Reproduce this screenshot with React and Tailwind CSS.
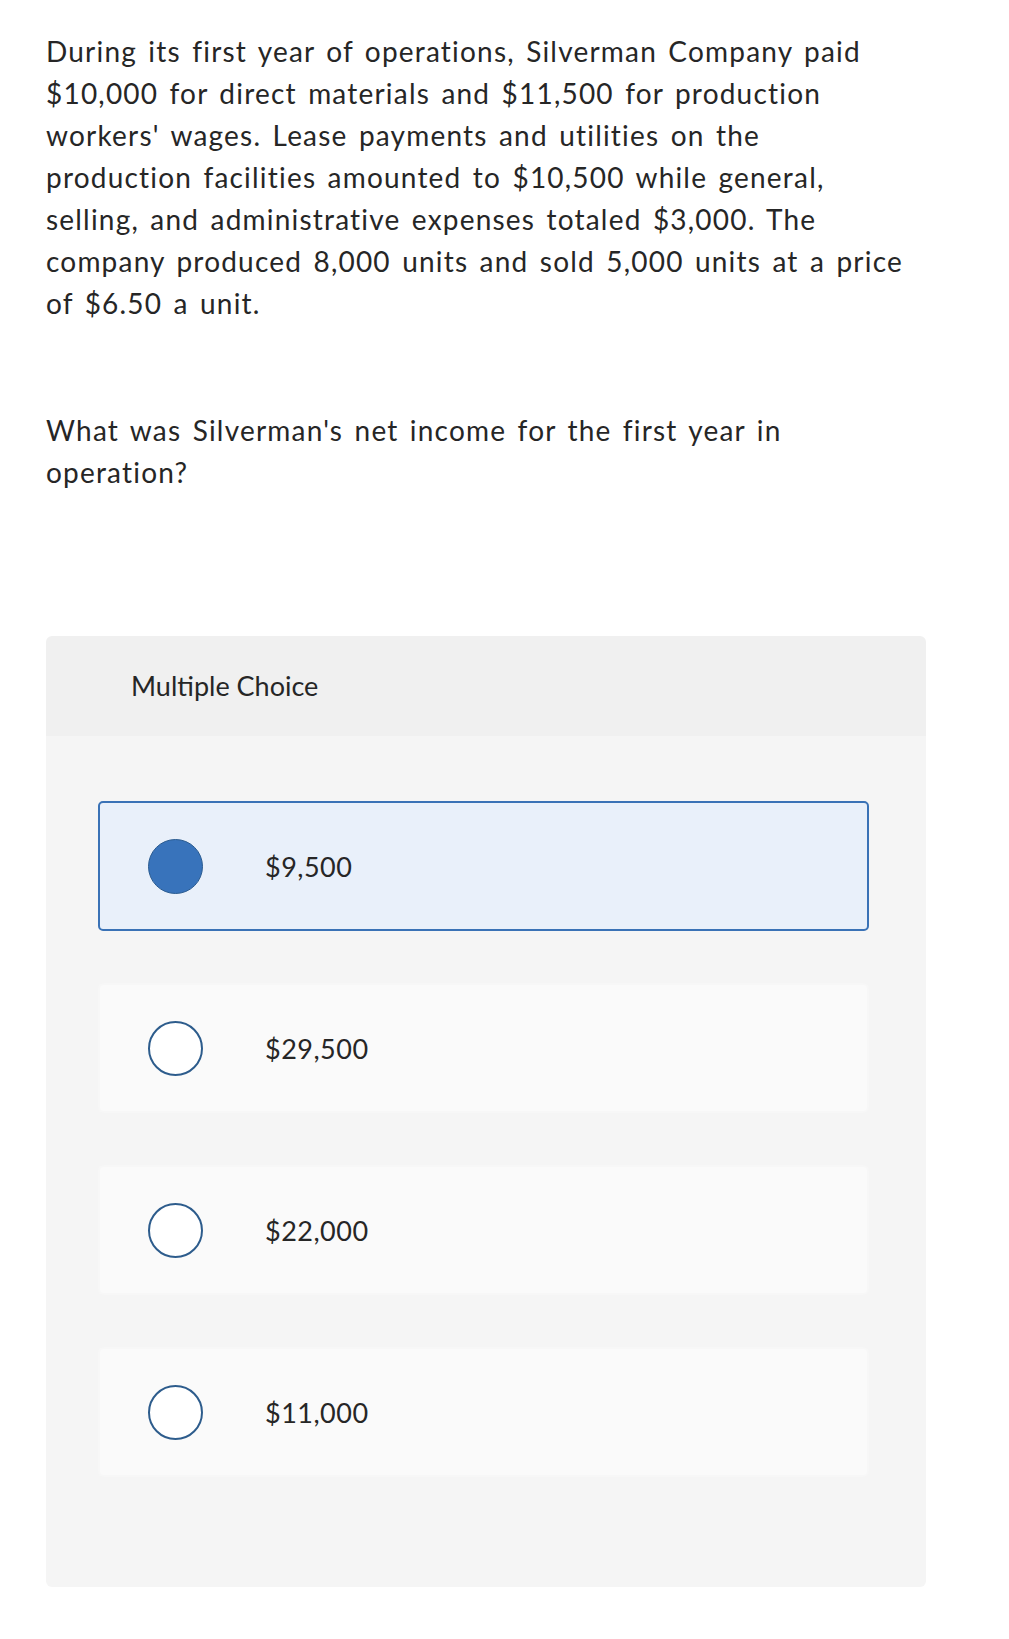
import React from "react";

const font = { fontFamily: "Lato, 'Open Sans', sans-serif" };

const para = [
  "During its first year of operations, Silverman Company paid",
  "$10,000 for direct materials and $11,500 for production",
  "workers' wages. Lease payments and utilities on the",
  "production facilities amounted to $10,500 while general,",
  "selling, and administrative expenses totaled $3,000. The",
  "company produced 8,000 units and sold 5,000 units at a price",
  "of $6.50 a unit.",
];

const question = [
  "What was Silverman's net income for the first year in",
  "operation?",
];

const options = [
  { label: "$9,500", selected: true },
  { label: "$29,500", selected: false },
  { label: "$22,000", selected: false },
  { label: "$11,000", selected: false },
];

function Option({ label, selected }) {
  return (
    <div
      className={
        selected
          ? "flex h-[130px] w-[771px] items-center rounded-[5px] border-2 border-[#3a72b6] bg-[#e9f0fa] pl-[48px]"
          : "flex h-[130px] w-[771px] items-center rounded-[6px] border-2 border-[#f7f7f7] bg-[#fafafa] pl-[48px]"
      }
    >
      {selected ? (
        <div className="h-[55px] w-[55px] shrink-0 rounded-full border-[1.5px] border-[#2a5b90] bg-[#3873bb]" />
      ) : (
        <div className="h-[55px] w-[55px] shrink-0 rounded-full border-2 border-[#2d5c8c] bg-white" />
      )}
      <span className="ml-[62px] text-[27px] leading-none tracking-[0.5px] text-[#262626] [font-variant-ligatures:none]">
        {label}
      </span>
    </div>
  );
}

export default function App() {
  return (
    <div className="min-h-[1639px] w-[1009px] bg-white text-[#262626]" style={font}>
      <div className="pl-[46px] pt-[30px] text-[28px] leading-[42px] tracking-[1.2px] [word-spacing:3px] [font-variant-ligatures:none]">
        {para.map((l, i) => (
          <div key={i} className="whitespace-nowrap">{l}</div>
        ))}
      </div>
      <div className="mt-[85px] pl-[46px] text-[28px] leading-[42px] tracking-[1.2px] [word-spacing:3px] [font-variant-ligatures:none]">
        {question.map((l, i) => (
          <div key={i} className="whitespace-nowrap">{l}</div>
        ))}
      </div>
      <div className="ml-[46px] mt-[143px] w-[880px] overflow-hidden rounded-[6px]">
        <div className="flex h-[100px] items-center bg-[#f0f0f0] pl-[85px] text-[27px]">
          Multiple Choice
        </div>
        <div className="flex flex-col gap-[52px] bg-[#f5f5f5] pb-[110px] pl-[52px] pt-[65px]">
          {options.map((o) => (
            <Option key={o.label} {...o} />
          ))}
        </div>
      </div>
    </div>
  );
}
